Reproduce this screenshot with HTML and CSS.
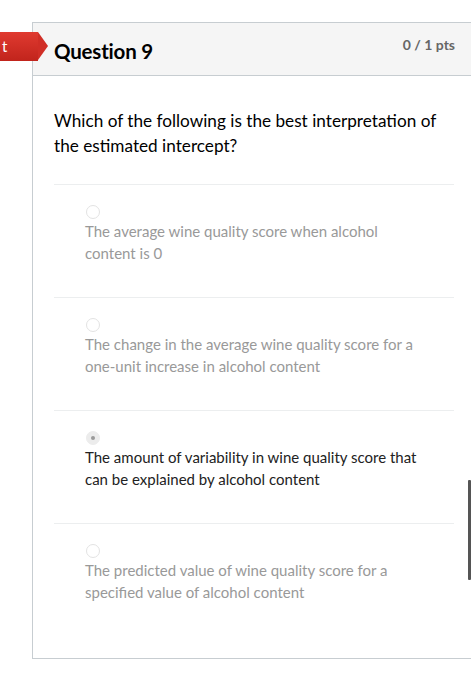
FILE: index.html
```html
<!DOCTYPE html>
<html>
<head>
<meta charset="utf-8">
<link rel="stylesheet" href="styles.css">
</head>
<body>
<div class="page">
  <div class="flag"><span>t</span></div>
  <div class="card">
    <div class="header">
      <h2 class="title">Question 9</h2>
      <div class="pts">0 / 1 pts</div>
    </div>
    <div class="content">
      <p class="question">Which of the following is the best interpretation of the estimated intercept?</p>
      <div class="answers">
        <div class="answer">
          <span class="radio"></span>
          <div class="label">The average wine quality score when alcohol content is 0</div>
        </div>
        <div class="answer">
          <span class="radio"></span>
          <div class="label">The change in the average wine quality score for a one-unit increase in alcohol content</div>
        </div>
        <div class="answer selected">
          <span class="radio"></span>
          <div class="label">The amount of variability in wine quality score that can be explained by alcohol content</div>
        </div>
        <div class="answer">
          <span class="radio"></span>
          <div class="label">The predicted value of wine quality score for a specified value of alcohol content</div>
        </div>
      </div>
    </div>
  </div>
  <div class="scrollbar"></div>
</div>
</body>
</html>
```
FILE: styles.css
```css
html, body {
  margin: 0;
  padding: 0;
  background: #fff;
  overflow: hidden;
}
body {
  font-family: Lato, "Open Sans", "Liberation Sans", sans-serif;
  color: #2d3b45;
}
.page {
  position: relative;
  width: 471px;
  height: 700px;
  overflow: hidden;
}
.card {
  margin-top: 22px;
  margin-left: 32px;
  width: 441px;
  border: 1px solid #c7cdd1;
  border-right: none;
  height: 635px;
}
.header {
  height: 52px;
  background: #f5f5f5;
  border-bottom: 1px solid #c7cdd1;
  display: flex;
  justify-content: space-between;
  padding: 0 19px 0 21px;
}
.title {
  margin: 0;
  font-size: 20.5px;
  font-weight: 700;
  color: #000;
  padding-top: 16px;
  letter-spacing: -0.2px;
}
.pts {
  font-size: 14px;
  font-weight: 700;
  color: #666;
  padding-top: 13px;
}
.content {
  padding: 0 20px 0 21px;
}
.question {
  margin: 0;
  padding-top: 32px;
  font-size: 17.2px;
  line-height: 25px;
  color: #000;
  padding-bottom: 26px;
  border-bottom: 1px solid #eceeef;
}
.answer {
  height: 113px;
  border-bottom: 1px solid #eceeef;
  padding-left: 31px;
  padding-top: 20px;
  box-sizing: border-box;
}
.answer:last-child {
  border-bottom: none;
}
.radio {
  display: block;
  width: 12px;
  height: 12px;
  border: 1px solid #e3e3e3;
  border-radius: 50%;
  margin-left: 1px;
  margin-bottom: 1px;
  box-sizing: content-box;
}
.selected .radio {
  background: #ececec;
  border-color: #ececec;
  position: relative;
}
.selected .radio::after {
  content: "";
  position: absolute;
  left: 4px;
  top: 4px;
  width: 4px;
  height: 4px;
  border-radius: 50%;
  background: #9a9a9a;
}
.label {
  font-size: 15px;
  line-height: 22px;
  color: #999;
  max-width: 335px;
}
.selected .label {
  color: #222;
}
.flag {
  position: absolute;
  left: 0;
  top: 32px;
  width: 38px;
  height: 29px;
  background: linear-gradient(#e03a30, #c1241c);
  color: #fff;
  font-size: 15px;
  line-height: 28px;
}
.flag::after {
  content: "";
  position: absolute;
  right: -10px;
  top: 0;
  border-top: 14.5px solid transparent;
  border-bottom: 14.5px solid transparent;
  border-left: 10px solid #d02e26;
}
.flag span {
  padding-left: 2px;
}
.scrollbar {
  position: absolute;
  left: 468px;
  top: 480px;
  width: 3px;
  height: 100px;
  background: #555;
  border-radius: 1px;
}
```
